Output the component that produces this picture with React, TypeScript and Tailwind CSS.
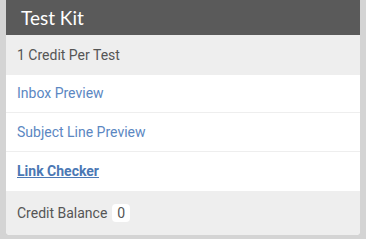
import React from "react";

export default function App() {
  return (
    <div className="w-[366px] h-[239px] bg-[#d4d4d4] pl-[6px] pr-[6px] overflow-hidden" style={{ fontFamily: "Roboto, sans-serif" }}>
      <div className="w-[354px] h-[235px] bg-white rounded-b-[4px] overflow-hidden flex flex-col">
        <div className="h-[35px] bg-[#5a5a5a] flex items-center pl-[15px]">
          <span className="text-white text-[19px] leading-none" style={{ fontFamily: "Lato, sans-serif" }}>Test Kit</span>
        </div>
        <div className="h-[40px] bg-[#eeeeee] flex items-center pl-[11px] text-[14px] text-[#555555]">
          1 Credit Per Test
        </div>
        <div className="h-[38px] flex items-center pl-[11px] text-[14px] text-[#5b87c2] border-b border-[#eeeeee]">
          Inbox Preview
        </div>
        <div className="h-[39px] flex items-center pl-[11px] text-[14px] text-[#5b87c2] border-b border-[#eeeeee]">
          Subject Line Preview
        </div>
        <div className="h-[39px] flex items-center pl-[11px] text-[14px] text-[#4b78b4] font-bold underline">
          Link Checker
        </div>
        <div className="flex-1 bg-[#eeeeee] flex items-center pl-[11px] text-[14px] text-[#555555]">
          <span>Credit Balance</span>
          <span className="ml-[5px] bg-white rounded-[4px] px-[5px] h-[18px] flex items-center text-[#555555]">0</span>
        </div>
      </div>
    </div>
  );
}
